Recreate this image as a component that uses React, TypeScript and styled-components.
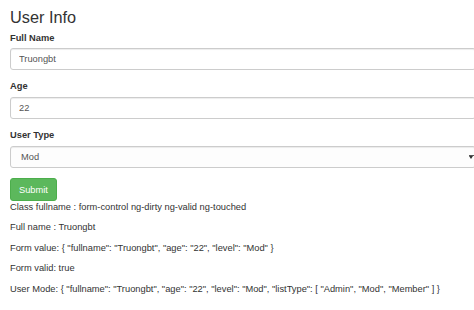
import React from 'react';
import styled, { createGlobalStyle } from 'styled-components';

const GlobalStyle = createGlobalStyle`
  html, body {
    margin: 0;
    padding: 0;
    overflow: hidden;
    background: #fff;
  }

  body {
    font-family: "Liberation Sans", Arial, Helvetica, sans-serif;
    font-size: 9.3px;
    line-height: 13.6px;
    color: #333;
  }

  * {
    box-sizing: border-box;
  }
`;

const Page = styled.div`
  width: 476px;
  padding: 0 0 0 10px;
`;

const Title = styled.h3`
  margin: 7.5px 0 6px;
  font-size: 16.3px;
  line-height: 18px;
  font-weight: 400;
  color: #333;
`;

const Group = styled.div`
  margin-bottom: 10px;
`;

const Label = styled.label`
  display: block;
  margin-bottom: 3.4px;
  font-weight: 700;
  line-height: 13.6px;
`;

const Input = styled.input`
  display: block;
  width: 100%;
  height: 22px;
  padding: 0 8px;
  font-family: inherit;
  font-size: 9.3px;
  color: #555;
  background: #fff;
  border: 1px solid #ccc;
  border-radius: 3px;
  box-shadow: inset 0 1px 1px rgba(0, 0, 0, 0.075);
  outline: none;
`;

const SelectWrap = styled.div`
  position: relative;
`;

const Select = styled.select`
  display: block;
  width: 100%;
  height: 22px;
  padding: 0 8px 0 10px;
  font-family: inherit;
  font-size: 9.3px;
  color: #555;
  background: #fdfdfd;
  border: 1px solid #ccc;
  border-radius: 3px;
  box-shadow: inset 0 1px 1px rgba(0, 0, 0, 0.075);
  appearance: none;
  -webkit-appearance: none;
  outline: none;
`;

const Arrow = styled.span`
  position: absolute;
  top: 10px;
  left: 459px;
  width: 0;
  height: 0;
  border-left: 2.5px solid transparent;
  border-right: 2.5px solid transparent;
  border-top: 3px solid #333;

  &::before {
    content: '';
    position: absolute;
    top: -4px;
    left: -2.5px;
    width: 5px;
    height: 1px;
    background: #555;
  }
`;

const SubmitButton = styled.button`
  display: block;
  height: 22.5px;
  padding: 0 8px;
  font-family: inherit;
  font-size: 9.3px;
  color: #fff;
  background: #5cb85c;
  border: 1px solid #4cae4c;
  border-radius: 3px;
  cursor: pointer;
`;

const Line = styled.p`
  margin: 0 0 6.8px;
  line-height: 13.6px;
  white-space: nowrap;
`;

const App = () => {
  return (
    <>
      <GlobalStyle />
      <Page>
        <Title>User Info</Title>
        <form onSubmit={(e) => e.preventDefault()}>
          <Group>
            <Label>Full Name</Label>
            <Input defaultValue="Truongbt" />
          </Group>
          <Group>
            <Label>Age</Label>
            <Input defaultValue="22" />
          </Group>
          <Group>
            <Label>User Type</Label>
            <SelectWrap>
              <Select defaultValue="Mod">
                <option>Admin</option>
                <option>Mod</option>
                <option>Member</option>
              </Select>
              <Arrow />
            </SelectWrap>
          </Group>
          <SubmitButton type="submit">Submit</SubmitButton>
        </form>
        <Line>Class fullname : form-control ng-dirty ng-valid ng-touched</Line>
        <Line>Full name : Truongbt</Line>
        <Line>Form value: {'{ "fullname": "Truongbt", "age": "22", "level": "Mod" }'}</Line>
        <Line>Form valid: true</Line>
        <Line>
          User Mode: {'{ "fullname": "Truongbt", "age": "22", "level": "Mod", "listType": [ "Admin", "Mod", "Member" ] }'}
        </Line>
      </Page>
    </>
  );
};

export default App;
